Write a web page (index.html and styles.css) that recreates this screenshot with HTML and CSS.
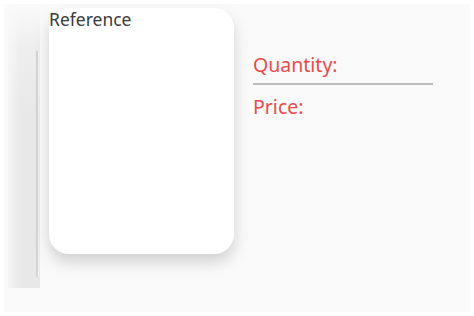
FILE: index.html
```html
<!DOCTYPE html>
<html>
<head>
<meta charset="utf-8">
<link rel="stylesheet" href="styles.css">
</head>
<body>
<div class="frame">
  <div class="rail"><div class="rail-line"></div></div>
  <div class="card">
    <div class="card-title">Reference</div>
  </div>
  <div class="fields">
    <div class="field">Quantity:</div>
    <div class="divider"></div>
    <div class="field">Price:</div>
  </div>
</div>
</body>
</html>
```
FILE: styles.css
```css
html, body {
  margin: 0;
  padding: 0;
  background: #ffffff;
}
body {
  font-family: "Noto Sans", "Open Sans", sans-serif;
}
.frame {
  margin: 4px;
  width: 466px;
  height: 308px;
  background: #fafafa;
  display: flex;
  align-items: flex-start;
}
.rail {
  margin-left: 4px;
  width: 32px;
  height: 284px;
  background:
    linear-gradient(to right, rgba(250, 250, 250, 0.7) 0%, rgba(250, 250, 250, 0) 40%),
    linear-gradient(to bottom, #fafafa 0%, #eeeeee 15%, #e8e8e8 40%, #e8e8e8 100%);
  display: flex;
  justify-content: flex-end;
  padding-top: 47px;
  box-sizing: border-box;
  padding-right: 1px;
}
.rail-line {
  width: 2px;
  height: 226px;
  background: #d4d4d4;
  border-right: 1px solid #f6f6f6;
}
.card {
  margin-left: 9px;
  margin-top: 4px;
  width: 185px;
  height: 246px;
  background: #ffffff;
  border-radius: 20px;
  box-shadow: 0 8px 16px rgba(0, 0, 0, 0.17);
}
.card-title {
  font-size: 17.5px;
  line-height: 20px;
  color: #3a3a3a;
  margin-top: 1px;
}
.fields {
  margin-left: 19px;
  padding-top: 47px;
  width: 180px;
}
.field {
  font-size: 19.5px;
  line-height: 27px;
  color: #e84b4b;
}
.divider {
  height: 2px;
  background: #bdbdbd;
  margin-top: 5px;
  margin-bottom: 8px;
}
```
